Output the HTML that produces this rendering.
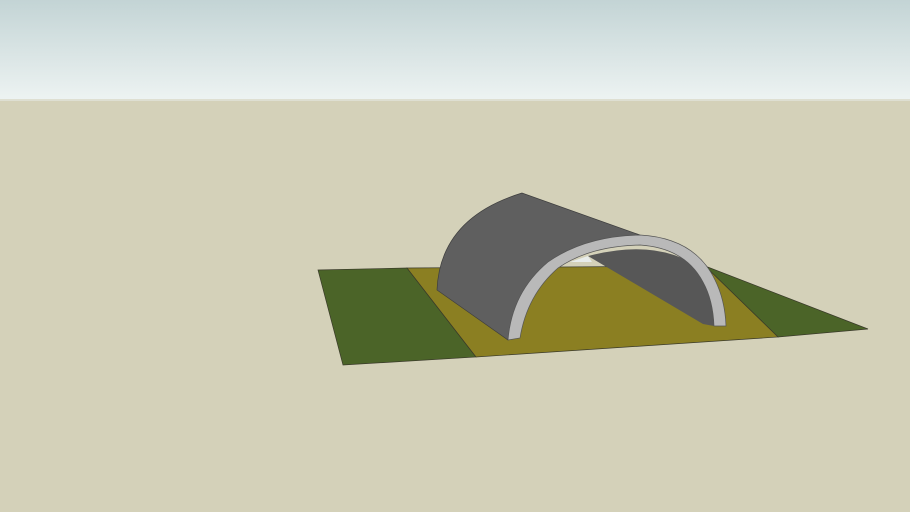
<!DOCTYPE html>
<html><head><meta charset="utf-8"><style>html,body{margin:0;padding:0;width:910px;height:512px;overflow:hidden;background:#d4d1b9}</style></head>
<body>
<svg width="910" height="512" viewBox="0 0 910 512" xmlns="http://www.w3.org/2000/svg">
<defs>
<linearGradient id="sky" x1="0" y1="0" x2="0" y2="1"><stop offset="0" stop-color="#c3d4d5"/><stop offset="1" stop-color="#edf3f2"/></linearGradient>
</defs>
<rect width="910" height="100" fill="url(#sky)"/>
<rect y="99" width="910" height="2" fill="#dedfd2"/>
<rect y="101" width="910" height="411" fill="#d4d1b9"/>
<polygon points="318,270 407,268 476,357 343,365" fill="#4b6428" stroke="#3a3a2a" stroke-width="0.7"/>
<polygon points="705,266 868,329 778,337" fill="#4b6428" stroke="#3a3a2a" stroke-width="0.7"/>
<polygon points="407,268 705,266 778,337 476,357" fill="#8b7f22" stroke="#3a3a2a" stroke-width="0.7"/>
<!-- inner back wall -->
<path d="M588,256 Q650,240 690,262 Q712,285 714,326 L703,324 Z" fill="#575757"/>
<path d="M570,262 L588,256 L592,262 Z" fill="#e8ecea"/>
<!-- outer shell -->
<path d="M437,290 Q440,218 522,193 L640,235 Q585,238 550,262 Q515,295 508,340 Z" fill="#5f5f5f" stroke="#3e3e3e" stroke-width="0.7"/>
<!-- front arch ring -->
<path d="M508,340 Q512,292 548,262 Q585,236 640,235 Q695,238 715,280 Q725,300 726,326 L714,326 Q713,300 703,282 Q685,248 640,245 Q590,246 558,268 Q527,295 520,338 Z" fill="#b9b9b9" stroke="#555" stroke-width="0.7"/>
</svg>
</body></html>
